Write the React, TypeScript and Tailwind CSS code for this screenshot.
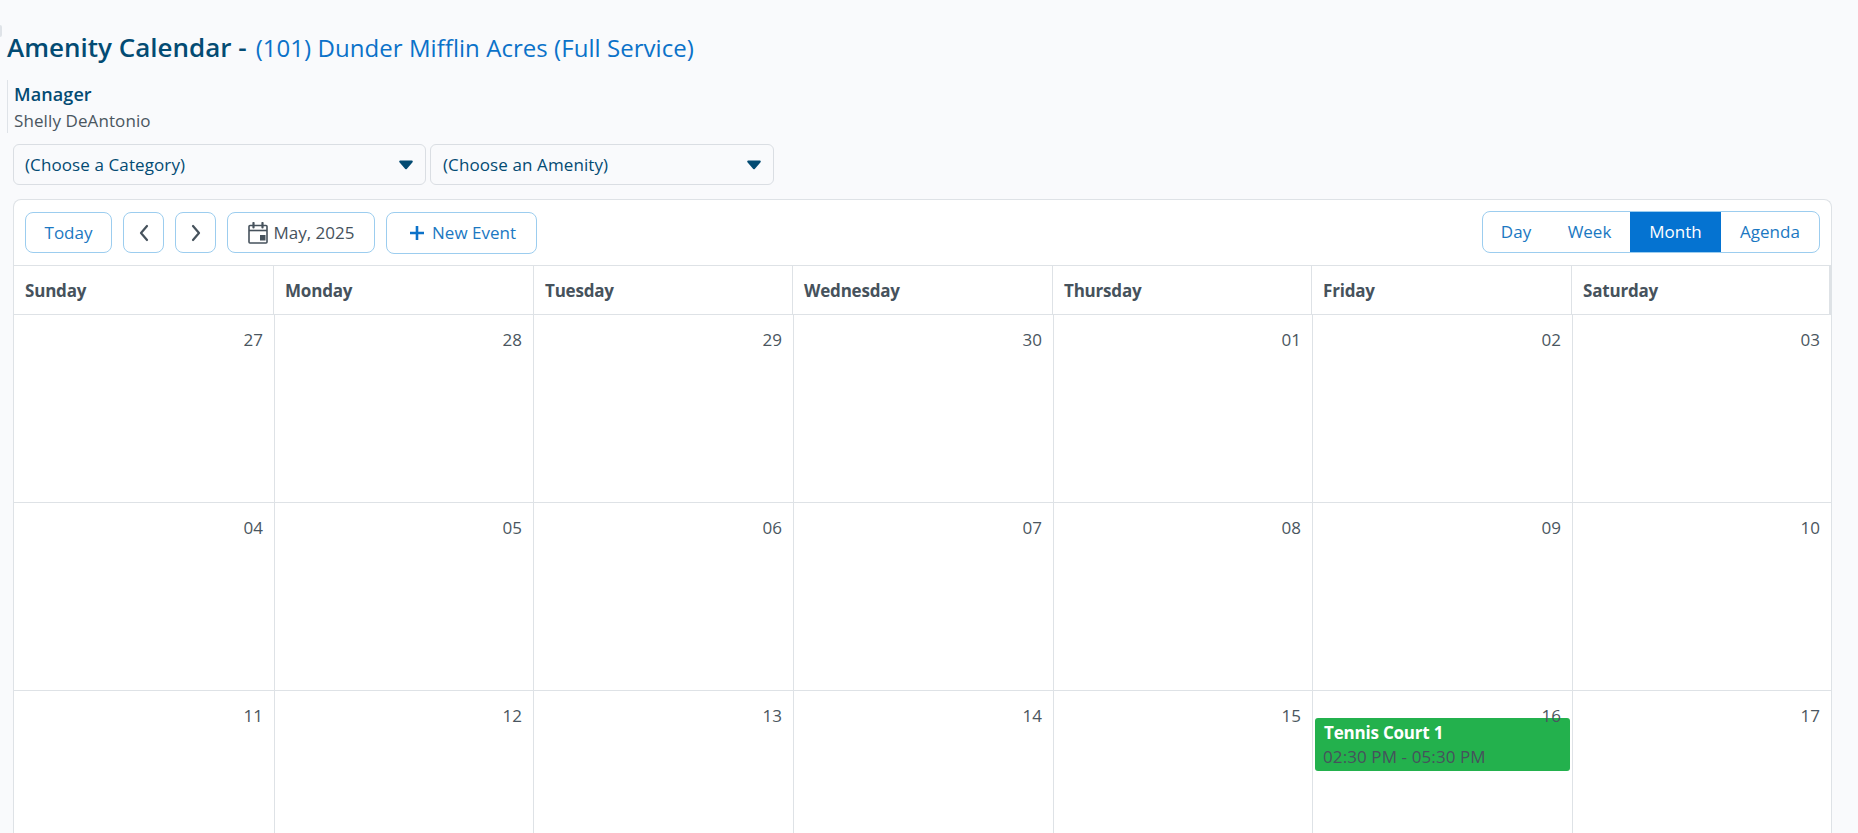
const FONT = "font-['Open_Sans','Noto_Sans',sans-serif]";

const DAYS = ["Sunday", "Monday", "Tuesday", "Wednesday", "Thursday", "Friday", "Saturday"];
const WEEKS = [
  ["27", "28", "29", "30", "01", "02", "03"],
  ["04", "05", "06", "07", "08", "09", "10"],
  ["11", "12", "13", "14", "15", "16", "17"],
];

function Caret() {
  return (
    <svg width="16" height="10" viewBox="0 0 16 10" className="shrink-0">
      <path d="M2.2 1.5h11.6L8 8.3z" fill="#034b73" stroke="#034b73" strokeWidth="2" strokeLinejoin="round" />
    </svg>
  );
}

function CalendarIcon() {
  return (
    <svg width="20" height="22" viewBox="0 0 20 22" fill="none" className="shrink-0">
      <rect x="1" y="3.5" width="18" height="17.5" rx="1" stroke="#46525c" strokeWidth="1.6" />
      <path d="M1 8.5h18" stroke="#46525c" strokeWidth="1.6" />
      <path d="M5.5 1v4.5M14.5 1v4.5" stroke="#46525c" strokeWidth="2.2" strokeLinecap="round" />
      <rect x="12" y="13" width="5.5" height="5.5" fill="#46525c" />
    </svg>
  );
}

function Chevron({ d }: { d: string }) {
  return (
    <svg width="12" height="18" viewBox="0 0 12 18" fill="none" className="shrink-0">
      <path d={d} stroke="#46525c" strokeWidth="2.2" strokeLinecap="round" strokeLinejoin="round" />
    </svg>
  );
}

function ToolButton({ className, children }: { className: string; children: React.ReactNode }) {
  return (
    <button
      type="button"
      className={`flex items-center justify-center rounded-lg border border-[#9ccdef] bg-white text-[17px] ${className}`}
    >
      {children}
    </button>
  );
}

export default function App() {
  return (
    <div className={`${FONT} relative h-[833px] overflow-hidden bg-[#f9fafc] pl-[7px] pt-[29px]`}>
      <div className="absolute left-0 top-[25px] h-[12px] w-[2px] rounded-r-full bg-[#dfe3e8]" />

      <h1 className="flex h-[36px] items-center text-[26px] font-semibold leading-none text-[#034b73]">
        Amenity Calendar -
        <span className="ml-[9px] pt-px text-[24px] font-medium tracking-[0.05px] text-[#0b72c9]">(101) Dunder Mifflin Acres (Full Service)</span>
      </h1>

      <div className="mt-[15px] h-[53px] border-l border-[#dfe3e8] pl-[6px]">
        <div className="pt-[2px] text-[18px] font-semibold leading-[24px] tracking-[0.1px] text-[#034b73]">Manager</div>
        <div className="mt-[3px] text-[17px] leading-[24px] tracking-[0.1px] text-[#4a5660]">Shelly DeAntonio</div>
      </div>

      <div className="ml-[6px] mt-[11px] flex gap-[4px]">
        {[
          ["(Choose a Category)", "w-[413px] pl-[11px]"],
          ["(Choose an Amenity)", "w-[344px] pl-[12px]"],
        ].map(([label, width]) => (
          <div
            key={label}
            className={`flex h-[41px] items-center justify-between rounded-md border border-[#dadee3] pr-[11px] text-[17px] tracking-[0.1px] text-[#034b73] ${width}`}
          >
            {label}
            <Caret />
          </div>
        ))}
      </div>

      <div className="ml-[6px] mt-[14px] w-[1819px] rounded-t-lg border border-b-0 border-[#dee2e6] bg-white">
        <div className="flex h-[65px] items-start justify-between pl-[11px] pr-[11px] pt-[12px]">
          <div className="flex gap-[11px]">
            <ToolButton className="h-[41px] w-[87px] text-[#1b78c2]">Today</ToolButton>
            <ToolButton className="h-[41px] w-[41px]">
              <Chevron d="M9 2L3 9l6 7" />
            </ToolButton>
            <ToolButton className="h-[41px] w-[41px]">
              <Chevron d="M3 2l6 7-6 7" />
            </ToolButton>
            <ToolButton className="h-[41px] w-[148px] gap-[6px] text-[#46525c]">
              <CalendarIcon />
              May, 2025
            </ToolButton>
            <ToolButton className="h-[42px] w-[151px] gap-[8px] pl-[3px] text-[#1b78c2]">
              <svg width="14" height="14" viewBox="0 0 14 14" className="shrink-0">
                <path d="M7 0v14M0 7h14" stroke="#0b72c9" strokeWidth="2.6" />
              </svg>
              New Event
            </ToolButton>
          </div>
          <div className="-mt-px flex h-[42px] w-[338px] overflow-hidden rounded-lg border border-[#9ccdef] text-[17px] text-[#1b78c2]">
            <div className="flex w-[66px] items-center justify-center">Day</div>
            <div className="flex w-[81px] items-center justify-center">Week</div>
            <div className="flex w-[91px] items-center justify-center bg-[#0573d1] text-white">Month</div>
            <div className="flex flex-1 items-center justify-center">Agenda</div>
          </div>
        </div>

        <div className="grid h-[50px] grid-cols-[260px_260px_259px_260px_259px_260px_1fr] border-y border-r-2 border-[#dee2e6]">
          {DAYS.map((day, i) => (
            <div
              key={day}
              className={`flex items-center pl-[11px] pt-px text-[17px] font-bold tracking-[-0.2px] text-[#46525c] ${i < 6 ? "border-r border-[#dee2e6]" : ""}`}
            >
              {day}
            </div>
          ))}
        </div>

        {WEEKS.map((week) => (
          <div
            key={week[0]}
            className="grid h-[188px] grid-cols-[261px_259px_260px_260px_259px_260px_1fr] border-b border-[#dee2e6] last:border-b-0"
          >
            {week.map((date, i) => (
              <div key={date} className={`px-[2px] pt-[13px] ${i < 6 ? "border-r border-[#dee2e6]" : ""}`}>
                <div className="pr-[9px] text-right text-[17px] leading-[24px] text-[#4a5660]">{date}</div>
                {date === "16" && (
                  <div className="-mt-[10px] h-[53px] rounded-[3px] bg-[#23b14d] pl-[8px] pt-[3px]">
                    <div className="pl-px text-[17px] font-bold leading-[24px] tracking-[-0.2px] text-white">Tennis Court 1</div>
                    <div className="text-[17px] leading-[24px] tracking-[0.1px] text-[#46525c]">02:30 PM - 05:30 PM</div>
                  </div>
                )}
              </div>
            ))}
          </div>
        ))}
      </div>
    </div>
  );
}
